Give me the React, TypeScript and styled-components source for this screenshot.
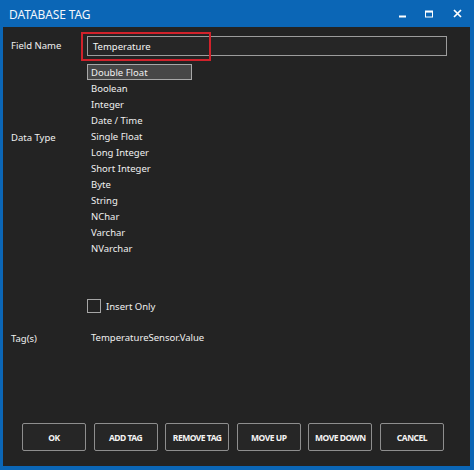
import React from "react";
import styled, { createGlobalStyle } from "styled-components";

const Global = createGlobalStyle`
  html, body { margin: 0; padding: 0; background: #0b66b6; }
  body { font-family: "Noto Sans", "Open Sans", "DejaVu Sans", sans-serif; }
`;

const Window = styled.div`
  width: 474px;
  height: 470px;
  background: #0b66b6;
  display: flex;
  flex-direction: column;
  box-sizing: border-box;
`;

const TitleBar = styled.div`
  height: 27px;
  display: flex;
  align-items: center;
  padding-left: 9px;
  box-sizing: border-box;
`;

const Title = styled.div`
  color: #f2f6fb;
  font-size: 12px;
  letter-spacing: -0.1px;
  flex: 1;
  padding-top: 1px;
`;

const Controls = styled.div`
  display: flex;
  align-items: center;
  height: 100%;
`;

const CtrlButton = styled.div<{ $ml?: number }>`
  width: 26px;
  height: 100%;
  display: flex;
  align-items: center;
  justify-content: center;
  margin-left: ${(p) => p.$ml ?? 0}px;
`;

const Spacer = styled.div`
  width: 4px;
`;

const Body = styled.div`
  flex: 1;
  margin: 0 4px 4px 3px;
  background: #232323;
  display: flex;
  flex-direction: column;
  padding: 9px 0 15px 0;
  box-sizing: border-box;
  color: #f0f0f0;
  font-size: 9.5px;
`;

const Row = styled.div<{ $mt?: number }>`
  display: grid;
  grid-template-columns: 84px 1fr;
  margin-top: ${(p) => p.$mt ?? 0}px;
`;

const Label = styled.div<{ $pt?: number }>`
  padding-left: 8px;
  padding-top: ${(p) => p.$pt ?? 0}px;
  line-height: 16px;
`;

const InputWrap = styled.div`
  position: relative;
  width: 360px;
  height: 20px;
`;

const TextInput = styled.div`
  width: 100%;
  height: 100%;
  box-sizing: border-box;
  border: 1px solid #9c9c9c;
  background: #262626;
  padding-left: 5px;
  display: flex;
  align-items: center;
  color: #f6f6f6;
`;

const Highlight = styled.div`
  position: absolute;
  left: -6px;
  top: -4px;
  width: 130px;
  height: 29px;
  border: 2px solid #d1222b;
  box-sizing: border-box;
  pointer-events: none;
`;

const List = styled.div`
  display: flex;
  flex-direction: column;
  width: 105px;
`;

const Item = styled.div<{ $selected?: boolean }>`
  height: 16px;
  line-height: 15px;
  box-sizing: border-box;
  padding-left: 3px;
  border: 1px solid ${(p) => (p.$selected ? "#a8a8a8" : "transparent")};
  background: ${(p) => (p.$selected ? "#474747" : "transparent")};
  white-space: nowrap;
`;

const CheckRow = styled.div`
  display: flex;
  align-items: center;
  gap: 5px;
  height: 14px;
`;

const Box = styled.div`
  width: 14px;
  height: 14px;
  box-sizing: border-box;
  border: 1px solid #a6a6a6;
`;

const Value = styled.div`
  line-height: 16px;
  padding-left: 4px;
`;

const ButtonBar = styled.div`
  margin-top: auto;
  display: flex;
  gap: 7.6px;
  padding-left: 19px;
`;

const Button = styled.div`
  width: 64px;
  height: 28px;
  box-sizing: border-box;
  border: 1px solid #8e8e8e;
  border-radius: 2px;
  background: #262626;
  display: flex;
  align-items: center;
  justify-content: center;
  font-size: 8.5px;
  font-weight: 700;
  letter-spacing: -0.5px;
  color: #f4f4f4;
  white-space: nowrap;
`;

const types = [
  "Double Float",
  "Boolean",
  "Integer",
  "Date / Time",
  "Single Float",
  "Long Integer",
  "Short Integer",
  "Byte",
  "String",
  "NChar",
  "Varchar",
  "NVarchar",
];

const buttons = ["OK", "ADD TAG", "REMOVE TAG", "MOVE UP", "MOVE DOWN", "CANCEL"];

export default function App() {
  return (
    <>
      <Global />
      <Window>
        <TitleBar>
          <Title>DATABASE TAG</Title>
          <Controls>
            <CtrlButton>
              <svg width="8" height="8" viewBox="0 0 8 8">
                <rect x="0" y="5.5" width="7" height="2" fill="#ffffff" />
              </svg>
            </CtrlButton>
            <CtrlButton>
              <svg width="8" height="8" viewBox="0 0 8 8">
                <rect x="0.5" y="1" width="7" height="6" fill="none" stroke="#ffffff" strokeWidth="1" />
                <rect x="0.5" y="1" width="7" height="1.6" fill="#ffffff" />
              </svg>
            </CtrlButton>
            <CtrlButton $ml={2}>
              <svg width="9" height="9" viewBox="0 0 9 9">
                <path d="M1 1 L8 8 M8 1 L1 8" stroke="#ffffff" strokeWidth="1.7" />
              </svg>
            </CtrlButton>
            <Spacer />
          </Controls>
        </TitleBar>
        <Body>
          <Row>
            <Label $pt={2}>Field Name</Label>
            <InputWrap>
              <TextInput>Temperature</TextInput>
              <Highlight />
            </InputWrap>
          </Row>
          <Row $mt={8}>
            <Label $pt={66}>Data Type</Label>
            <List>
              {types.map((t, i) => (
                <Item key={t} $selected={i === 0}>
                  {t}
                </Item>
              ))}
            </List>
          </Row>
          <Row $mt={43}>
            <div />
            <CheckRow>
              <Box />
              <span>Insert Only</span>
            </CheckRow>
          </Row>
          <Row $mt={17}>
            <Label $pt={1}>Tag(s)</Label>
            <Value>TemperatureSensor.Value</Value>
          </Row>
          <ButtonBar>
            {buttons.map((b) => (
              <Button key={b}>{b}</Button>
            ))}
          </ButtonBar>
        </Body>
      </Window>
    </>
  );
}
